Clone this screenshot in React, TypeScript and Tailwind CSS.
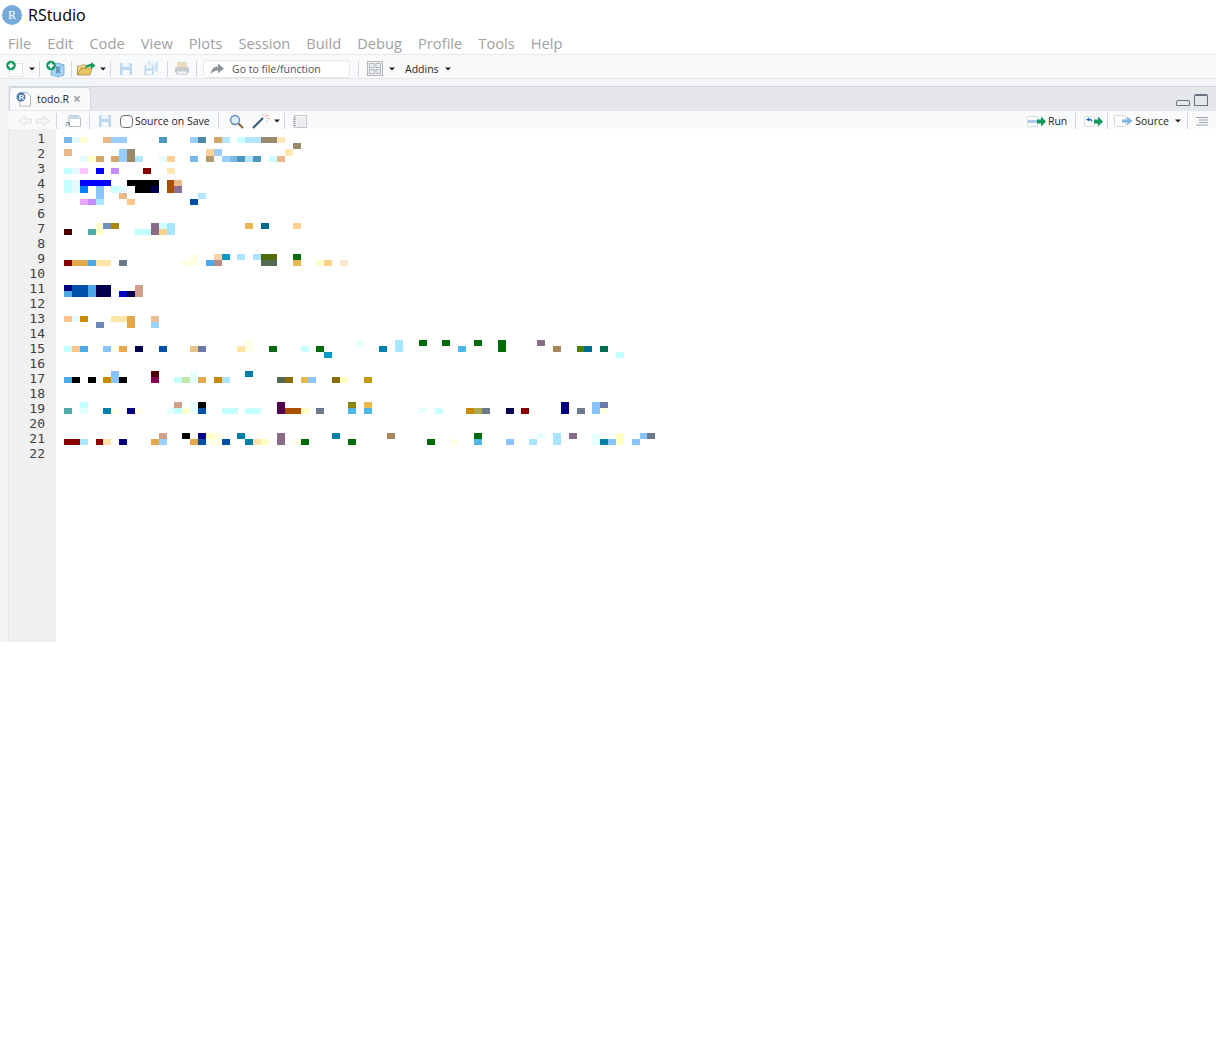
import React from "react";

const P: [number, string][] = [
  [137, "0:7ab8e8 1:e6fbff 2:ffffcc 5:e8b888 6:99ccff 7:99ccff 12:4d96bd 16:99ccff 17:4d8aa6 19:d4a76a 20:b3e6ff 22:ccffff 23:b3e6ff 24:b3e6ff 25:998a6b 26:998a6b 27:ffe6b3"],
  [143, "29:998a6b"],
  [149, "0:e8b888 7:99ccff 8:998a6b 18:ffd199 19:99ccff 28:ffe6b3"],
  [156, "2:e6fbff 3:ffffcc 4:d4a76a 6:d4a76a 7:99ccff 8:998a6b 9:b3e6ff 12:e6fbff 13:ffd199 16:7ab8e8 18:b59a6e 20:99ccff 21:7ab8e8 22:4d96bd 23:b3e6ff 24:4d96bd 26:ccffff 27:e8b888"],
  [168, "0:c4ffff 1:e6fbff 2:ffc4ff 4:0000ff 6:c48aff 10:8a0000 13:ffe6b3"],
  [180, "0:c4ffff 1:e6fbff 2:0000ff 3:0000ff 4:0000ff 5:0000ff 8:000000 9:000000 10:000000 11:000000 13:a85000 14:e8b888"],
  [186, "0:c4ffff 1:e6fbff 2:0080ff 4:8ac4ff 6:ccffff 7:e6fbff 9:000000 10:000000 11:00004d 13:a85000 14:8a7099"],
  [193, "4:8ac4ff 7:e8b888 17:b3e6ff"],
  [199, "2:e6a8ff 3:c48aff 4:a8e6ff 8:ffc48a 16:0050a8"],
  [223, "4:ffffcc 5:7090bd 6:a8860a 11:8a6b8a 12:ccffff 13:a8e6ff 23:e6b84d 25:006b8a 29:ffd18a"],
  [229, "0:4d0000 3:4da8a8 4:ffffcc 9:c4ffff 10:c4ffff 11:8a6b8a 12:ffd18a 13:a8e6ff"],
  [254, "16:ffffe6 19:ffd1a8 20:0099cc 22:a8e6ff 24:a8e6ff 25:506b0a 26:506b0a 29:006b0a"],
  [260, "0:8a0000 1:e6a84d 2:e6a84d 3:4da8e6 4:ffe6a8 5:ffe6a8 7:6b7a8a 15:ffffe6 16:ffffe6 18:4da8e6 19:b58a8a 25:506b50 26:506b50 29:e6b84d 32:ffffc4 33:ffd18a 35:ffe6cc"],
  [285, "0:000080 1:0050a8 2:0050a8 3:4da8e6 4:00004d 5:00004d 9:d1a08a"],
  [291, "0:4da8e6 1:0050a8 2:0050a8 3:4da8e6 4:00004d 5:00004d 7:0000cc 8:00004d 9:d1a08a"],
  [316, "0:ffc48a 1:e6fbff 2:c98a00 6:ffe6a8 7:ffe6a8 8:e6a84d 11:e8c09a"],
  [322, "4:6b8ab5 8:e6a84d 11:99d1ff"],
  [340, "23:ffffe6 37:e6ffff 42:a8e6ff 45:006b0a 48:006b0a 52:006b0a 55:006b0a 60:8a6b8a"],
  [346, "0:c4ffff 1:ffc48a 2:4da8e6 5:8ac4ff 6:ffffe6 7:e6a84d 9:00004d 12:0050a8 16:e6c48a 17:6b7aa8 22:ffe6a8 23:ffffe6 26:006b0a 30:c4ffff 32:006b0a 40:0080a8 42:a8e6ff 50:4db8e6 55:006b0a 62:a8865a 65:508000 66:006b8a 68:006b50"],
  [352, "33:0099cc 70:c4ffff"],
  [371, "6:8ac4ff 11:4d0000 16:e6ffff 23:0080a8"],
  [377, "0:4da8e6 1:000000 3:000000 5:c98a00 6:8ac4ff 7:000000 11:8a0050 14:c4ffff 15:c4e6a8 16:e6ffff 17:e6a84d 19:c98a00 20:a8e6ff 27:506b50 28:8a6b0a 30:e6b84d 31:8ac4ff 34:8a6b0a 35:ffffc4 38:c99a00"],
  [402, "2:c4ffff 14:d1a08a 16:e6ffff 17:000000 27:50004d 36:8a860a 38:e6b84d 63:000080 67:8ac4ff 68:6b7aa8"],
  [408, "0:4da8a8 2:e6ffff 5:0080a8 6:ffffe6 8:000080 9:ffffe6 13:e6ffff 14:c4ffff 15:ffffcc 16:e6ffff 17:0050a8 20:c4ffff 21:c4ffff 23:c4ffff 24:c4ffff 27:50004d 28:a85000 29:a85000 30:ffffc4 32:6b7a8a 36:4db8e6 38:4db8e6 45:e6ffff 47:c4ffff 51:c98a00 52:a8a850 53:6b7a8a 56:00004d 58:8a0000 63:000080 65:6b7a8a 67:8ac4ff 68:ffffe6"],
  [433, "12:d1a08a 15:000000 17:000080 18:ffffc4 19:ffffe6 22:0080a8 27:8a6b8a 34:0080a8 41:a8865a 52:006b0a 60:e6ffff 62:a8e6ff 64:8a6b8a 67:e6ffff 70:ffffc4 73:8ac4ff 74:6b7a8a"],
  [439, "0:8a0000 1:8a0000 2:a8e6ff 4:8a0000 5:ffe6a8 7:000080 11:e6a84d 12:99d1ff 16:e6a84d 17:0050a8 18:ffffe6 19:ffffe6 20:0050a8 23:0080a8 24:ffe6a8 25:ffffc4 27:8a6b8a 29:ffffe6 30:006b0a 36:006b0a 46:006b0a 49:ffffe6 52:4db8e6 56:8ac4ff 59:a8e6ff 62:a8e6ff 67:e6ffff 68:0080a8 69:8ac4ff 70:ffffc4 72:8ac4ff"],
];

function Blur() {
  return (
    <svg width="600" height="320" viewBox="0 0 600 320" shapeRendering="crispEdges" className="ml-2 shrink-0">
      {P.flatMap(([y, s]) =>
        s.split(" ").map((t) => {
          const [c, col] = t.split(":");
          const tall = y === 149 || y === 186;
          return <rect key={y + t} x={+c * 7.885} y={y - 129} width={8} height={tall ? 7 : 6} fill={"#" + col} />;
        })
      )}
    </svg>
  );
}

const Sep = ({ className = "" }: { className?: string }) => <div className={"h-4 w-px bg-gray-300 shrink-0 " + className} />;
const Caret = ({ className = "" }: { className?: string }) => (
  <svg width="6" height="4" viewBox="0 0 6 4" className={"shrink-0 " + className}>
    <path d="M0 0.5h6L3 3.5z" fill="#222" />
  </svg>
);

const NewFile = () => (
  <svg width="17" height="18" viewBox="0 0 17 18" className="shrink-0">
    <rect x="3.5" y="3.5" width="13" height="13" fill="#fff" stroke="#e2e4e6" />
    <circle cx="5" cy="5.5" r="4.8" fill="#129a5c" />
    <path d="M5 2.8v5.4M2.3 5.5h5.4" stroke="#fff" strokeWidth="1.8" />
  </svg>
);
const RProj = () => (
  <svg width="19" height="18" viewBox="0 0 19 18" className="shrink-0">
    <path d="M5 5l7-2 6 2v10l-6 2-7-2z" fill="#a9d3ef" stroke="#6ba7cf" strokeWidth=".8" />
    <path d="M5 5l7 2 6-2M12 7v10" stroke="#7db5da" strokeWidth=".8" fill="none" />
    <text x="9.5" y="13" fontSize="8" fontFamily="Liberation Serif" fill="#2b5f9a">R</text>
    <circle cx="5" cy="5.5" r="4.8" fill="#129a5c" />
    <path d="M5 2.8v5.4M2.3 5.5h5.4" stroke="#fff" strokeWidth="1.8" />
  </svg>
);
const Folder = () => (
  <svg width="20" height="16" viewBox="0 0 20 16" className="shrink-0">
    <path d="M1.5 6V14h12.5l2-7H5z" fill="#e9c467" stroke="#a8842f" strokeWidth=".7" />
    <path d="M1.5 14V5h3l1-1h5v3H5z" fill="#f3dc96" stroke="#a8842f" strokeWidth=".7" />
    <path d="M9 7c1-3 3-4 6-4V1l4.500 3.500L15 8V5.500c-2 0-4 .5-6 1.500z" fill="#129a5c" />
  </svg>
);
const Floppy = ({ c = "#b9d7ee" }: { c?: string }) => (
  <svg width="14" height="14" viewBox="0 0 14 14" className="shrink-0">
    <path d="M1 1h11l1 1v11H1z" fill={c} />
    <rect x="3.500" y="1" width="7" height="4" fill="#eef5fb" />
    <rect x="3.500" y="8" width="7" height="5" fill="#f5f9fd" />
  </svg>
);
const FloppyAll = () => (
  <svg width="16" height="15" viewBox="0 0 16 15" className="shrink-0">
    <path d="M5 0.500h10v10H5z" fill="#cfe2f3" />
    <path d="M7 0.500h6v3H7z" fill="#eef5fb" />
    <path d="M1 4h10v10.500H1z" fill="#b9d7ee" stroke="#f6f7f9" />
    <rect x="3" y="4.500" width="6" height="3" fill="#eef5fb" />
    <rect x="3" y="9.500" width="6" height="4" fill="#f5f9fd" />
  </svg>
);
const Printer = () => (
  <svg width="16" height="15" viewBox="0 0 17 15" className="shrink-0">
    <rect x="4" y="1" width="9" height="5" fill="#efdfb8" stroke="#d0c7ad" strokeWidth=".6" />
    <rect x="1" y="6" width="15" height="6.500" rx="1.500" fill="#c9cdd2" />
    <rect x="3" y="10" width="11" height="3.500" fill="#eceef0" stroke="#b5b9be" strokeWidth=".6" />
  </svg>
);
const GoArrow = () => (
  <svg width="14" height="12" viewBox="0 0 14 12" className="shrink-0">
    <path d="M8 0.500L14 5.500 8 10.500V7.500C5 7.500 2.500 8.500 0.500 11.500 1 7 3.500 3.500 8 3.500z" fill="#8f9499" />
  </svg>
);
const Grid = () => (
  <svg width="16" height="15" viewBox="0 0 16 15" fill="#f0f1f2" stroke="#b5b8bb" className="shrink-0">
    <rect x=".5" y=".5" width="15" height="14" />
    <rect x="2.500" y="2.500" width="4.500" height="4" />
    <rect x="9" y="2.500" width="4.500" height="4" />
    <rect x="2.500" y="8.500" width="4.500" height="4" />
    <rect x="9" y="8.500" width="4.500" height="4" />
  </svg>
);
const Nav = () => (
  <svg width="32" height="12" viewBox="0 0 32 12" className="shrink-0">
    <path d="M0.500 6L6.500 1v3h7v4h-7v3z M31.500 6L25.500 1v3h-7v4h7v3z" fill="#f2f4f5" stroke="#dfe2e4" />
  </svg>
);
const ShowSource = () => (
  <svg width="16" height="12" viewBox="0 0 16 12" className="shrink-0">
    <path d="M4 .5h9l2.500 2.500v8.500H4z" fill="#fff" stroke="#b9bfc4" />
    <path d="M4 .5h9l2.500 2.500v1H4z" fill="#c4dcef" />
    <path d="M0.500 11.500L4 8M1 7.500h3.500V11" stroke="#8f9499" fill="none" />
  </svg>
);
const Search = () => (
  <svg width="15" height="15" viewBox="0 0 15 15" className="shrink-0">
    <circle cx="6" cy="6" r="4.500" fill="#dcecf8" stroke="#5f8cb5" strokeWidth="1.300" />
    <path d="M9.500 9.500L14 14" stroke="#8a6a3c" strokeWidth="2.200" />
  </svg>
);
const Wand = () => (
  <svg width="18" height="16" viewBox="0 0 18 16" className="shrink-0">
    <path d="M1 15L11 5" stroke="#3f5a78" strokeWidth="2.200" />
    <path d="M11 5l1.500-1.500" stroke="#d8dde2" strokeWidth="2.200" />
    <path d="M14 1v3M15.500 5.500h2.500M14.500 7.500l1.500 1.500M10 1l1 1.500M17 2l-1.500 1.500" stroke="#e79a7a" strokeWidth=".9" />
  </svg>
);
const Notebook = () => (
  <svg width="14" height="13" viewBox="0 0 14 13" className="shrink-0">
    <rect x="1.500" y=".5" width="12" height="12" fill="#f7f8f9" stroke="#c3c7cb" />
    <path d="M4 3h8M4 5h8M4 7h8M4 9h8M4 11h8" stroke="#dde0e3" />
    <path d="M0 2.500h3M0 4.500h3M0 6.500h3M0 8.500h3M0 10.500h3" stroke="#aeb2b6" />
  </svg>
);
const RunIcon = () => (
  <svg width="19" height="11" viewBox="0 0 19 11" className="shrink-0">
    <rect x=".5" y=".5" width="10" height="10" rx="1" fill="#fff" stroke="#d7dadd" />
    <path d="M1 4h9v3H1z" fill="#a9cdea" />
    <path d="M10 3.500h4V0.500L19 5.500 14 10.500V7.500h-4z" fill="#129a5c" />
  </svg>
);
const ReRun = () => (
  <svg width="19" height="11" viewBox="0 0 19 11" className="shrink-0">
    <rect x=".5" y=".5" width="10" height="10" rx="1" fill="#fff" stroke="#d7dadd" />
    <path d="M5 1.500L2 3.500 5 5.500V4.500c2 0 3 .5 3 2.500 1-3-.5-4.500-3-4.500z" fill="#2a6cc0" />
    <path d="M10 3.500h4V0.500L19 5.500 14 10.500V7.500h-4z" fill="#129a5c" />
  </svg>
);
const SourceIcon = () => (
  <svg width="19" height="12" viewBox="0 0 19 12" className="shrink-0">
    <rect x=".5" y=".5" width="11" height="11" rx="1" fill="#fff" stroke="#d7dadd" />
    <path d="M8 4.500h5V1.500L18.500 6 13 10.500V7.500H8z" fill="#84b6e4" />
  </svg>
);
const Outline = () => (
  <svg width="12" height="9" viewBox="0 0 12 9" className="shrink-0">
    <path d="M0 .5h12M3 3h9M3 5.500h9M0 8h12" stroke="#9ea2a6" />
  </svg>
);
const RFile = () => (
  <svg width="15" height="15" viewBox="0 0 15 15" className="shrink-0">
    <path d="M4 .5h7l3.500 3.500v10H4z" fill="#fff" stroke="#aeb3b8" />
    <circle cx="5" cy="5" r="4.500" fill="#4f78ad" />
    <text x="2.800" y="7.800" fontSize="7.500" fontFamily="Liberation Sans" fontWeight="700" fill="#fff">R</text>
  </svg>
);

const font = { fontFamily: '"Open Sans", "Liberation Sans", sans-serif' };
const menus = ["File", "Edit", "Code", "View", "Plots", "Session", "Build", "Debug", "Profile", "Tools", "Help"];

export default function App() {
  return (
    <div className="h-[1044px] bg-white text-black overflow-hidden" style={font}>
      <div className="h-7.5 flex items-center pl-0.5">
        <div className="w-5 h-5 rounded-full bg-[#75aadb] flex items-center justify-center text-white text-xs font-['Liberation_Serif']">R</div>
        <span className="ml-1.5 text-base">RStudio</span>
      </div>
      <div className="h-6 flex items-center gap-4 pl-2 pt-0.5 text-neutral-400 text-[14.7px]">
        {menus.map((m) => <span key={m}>{m}</span>)}
      </div>
      <div className="h-6.25 flex items-center pl-1.5 pt-1 bg-gray-50 border-y border-gray-200">
        <NewFile />
        <Caret className="ml-1.5" />
        <Sep className="ml-1" />
        <div className="ml-1.5"><RProj /></div>
        <Sep className="ml-1.5" />
        <div className="ml-1"><Folder /></div>
        <Caret className="ml-1" />
        <Sep className="ml-1" />
        <div className="ml-2"><Floppy /></div>
        <div className="ml-2.5"><FloppyAll /></div>
        <Sep className="ml-2" />
        <div className="ml-1.5"><Printer /></div>
        <Sep className="ml-1.5" />
        <div className="ml-1.5 w-[147px] h-4.5 bg-white border border-gray-200 rounded-sm flex items-center pl-1.5 gap-2 text-[10.5px] text-neutral-600">
          <GoArrow />
          <span className="whitespace-nowrap mt-0.5">Go to file/function</span>
        </div>
        <Sep className="ml-2" />
        <div className="ml-2"><Grid /></div>
        <Caret className="ml-1.5" />
        <span className="ml-2.5 mt-0.5 text-[10.5px] text-neutral-800">Addins</span>
        <Caret className="ml-1.5" />
      </div>
      <div className="h-1.75 bg-gray-100" />
      <div className="pl-2 bg-gray-100">
        <div className="flex h-6 items-end bg-gray-200 border-t border-gray-300">
          <div className="w-20.5 h-5.75 ml-px bg-gray-50 border border-b-0 border-gray-300 rounded-t-sm flex items-center pl-1.5 text-[10.5px] text-neutral-800">
            <RFile />
            <span className="ml-1.5 mt-0.5">todo.R</span>
            <span className="ml-1 text-neutral-400 text-sm font-bold leading-none">×</span>
          </div>
          <div className="ml-auto flex items-end gap-1 pr-2 pb-1">
            <div className="w-3.5 h-1.5 border border-gray-500 rounded-t-xs" />
            <div className="w-3.5 h-3 border border-gray-500 border-t-2 rounded-t-xs" />
          </div>
        </div>
        <div className="h-4.75 flex items-center pl-2.5 pt-0.5 bg-gray-50 border-t border-gray-200 text-[10.5px]">
          <Nav />
          <Sep className="ml-1.5" />
          <div className="ml-2"><ShowSource /></div>
          <Sep className="ml-2" />
          <div className="ml-2"><Floppy /></div>
          <div className="ml-2 w-3.25 h-3.25 rounded-sm border border-neutral-500 bg-white shrink-0" />
          <span className="ml-0.5 mt-0.5 text-neutral-800 whitespace-nowrap">Source on Save</span>
          <Sep className="ml-2" />
          <div className="ml-2.5"><Search /></div>
          <div className="ml-2"><Wand /></div>
          <Caret className="ml-1" />
          <Sep className="ml-1" />
          <div className="ml-2"><Notebook /></div>
          <div className="ml-auto flex items-center pr-2 text-neutral-800">
            <RunIcon />
            <span className="ml-0.5 mt-0.5">Run</span>
            <Sep className="ml-2" />
            <div className="ml-2"><ReRun /></div>
            <Sep className="ml-1" />
            <div className="ml-1.5"><SourceIcon /></div>
            <span className="ml-0.5 mt-0.5">Source</span>
            <Caret className="ml-1.5" />
            <Sep className="ml-1.5" />
            <div className="ml-2"><Outline /></div>
          </div>
        </div>
      </div>
      <div className="h-128.25 flex bg-white">
        <div className="w-2 bg-gray-100 border-r border-gray-200 box-content" />
        <div className="w-11.75 bg-[#f0f0f0] pt-0.5 flex flex-col items-end pr-2.75 text-[13px] leading-[15px] text-neutral-700 font-['DejaVu_Sans_Mono']">
          {Array.from({ length: 22 }, (_, i) => <div key={i}>{i + 1}</div>)}
        </div>
        <Blur />
      </div>
    </div>
  );
}
